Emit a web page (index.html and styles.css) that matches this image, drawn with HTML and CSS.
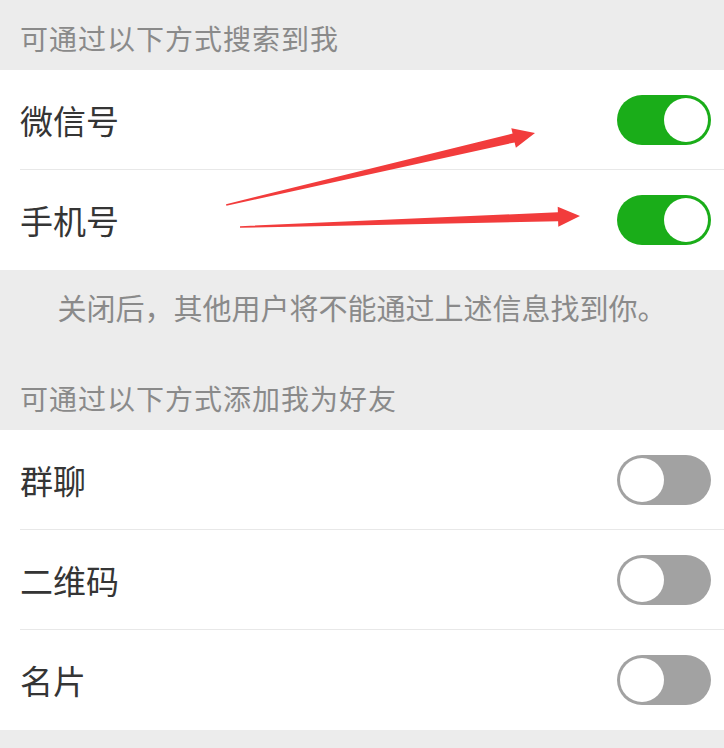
FILE: index.html
```html
<!DOCTYPE html>
<html lang="zh-CN">
<head>
<meta charset="utf-8">
<title>隐私</title>
<link rel="stylesheet" href="styles.css">
</head>
<body>
<div class="page">
  <div class="section-title">可通过以下方式搜索到我</div>
  <div class="group">
    <div class="row"><span class="label">微信号</span><span class="switch on"><span class="knob"></span></span></div>
    <div class="row"><span class="label">手机号</span><span class="switch on"><span class="knob"></span></span></div>
  </div>
  <div class="note">关闭后，其他用户将不能通过上述信息找到你。</div>
  <div class="section-title second">可通过以下方式添加我为好友</div>
  <div class="group">
    <div class="row"><span class="label">群聊</span><span class="switch off"><span class="knob"></span></span></div>
    <div class="row"><span class="label">二维码</span><span class="switch off"><span class="knob"></span></span></div>
    <div class="row"><span class="label">名片</span><span class="switch off"><span class="knob"></span></span></div>
  </div>
  <div class="tail"></div>
  <svg class="arrows" width="724" height="748" viewBox="0 0 724 748" aria-hidden="true">
    <polygon class="arrow" points="226,204.2 512.6,133.6 511.3,128.3 535,133 515.9,147.7 514.6,142.4 226.4,205.8"/>
    <polygon class="arrow" points="240,226.2 557.9,212.2 557.7,206.7 580,216 558.3,226.7 558.1,221.2 240,227.8"/>
  </svg>
</div>
</body>
</html>
```
FILE: styles.css
```css
html, body {
  margin: 0;
  padding: 0;
  background: #ececec;
}
.page {
  position: relative;
  width: 724px;
  height: 748px;
  overflow: hidden;
  font-family: "Noto Sans CJK SC", "Noto Sans", sans-serif;
  background: #ececec;
}
.section-title {
  box-sizing: border-box;
  height: 70px;
  padding: 24px 0 0 20px;
  font-size: 28px;
  line-height: 28px;
  color: #8a8a8a;
  letter-spacing: 1px;
}
.group {
  background: #ffffff;
}
.row {
  box-sizing: border-box;
  height: 100px;
  margin-left: 20px;
  padding-right: 13px;
  display: flex;
  align-items: center;
  justify-content: space-between;
  border-bottom: 1px solid #e8e8e8;
}
.row:last-child {
  border-bottom: none;
}
.label {
  font-size: 33px;
  line-height: 40px;
  color: #353535;
}
.switch {
  box-sizing: border-box;
  width: 94px;
  height: 50px;
  border-radius: 25px;
  display: flex;
  align-items: center;
  padding: 0 3px;
}
.switch.on {
  background: #1aad19;
  justify-content: flex-end;
}
.switch.off {
  background: #a2a2a2;
  justify-content: flex-start;
}
.knob {
  width: 44px;
  height: 44px;
  border-radius: 50%;
  background: #ffffff;
}
.note {
  box-sizing: border-box;
  height: 90px;
  padding-top: 23px;
  text-align: center;
  font-size: 29px;
  line-height: 29px;
  color: #8a8a8a;
}
.tail {
  height: 18px;
}
.arrows {
  position: absolute;
  left: 0;
  top: 0;
  pointer-events: none;
}
.arrow {
  fill: #f23c3c;
}
```
